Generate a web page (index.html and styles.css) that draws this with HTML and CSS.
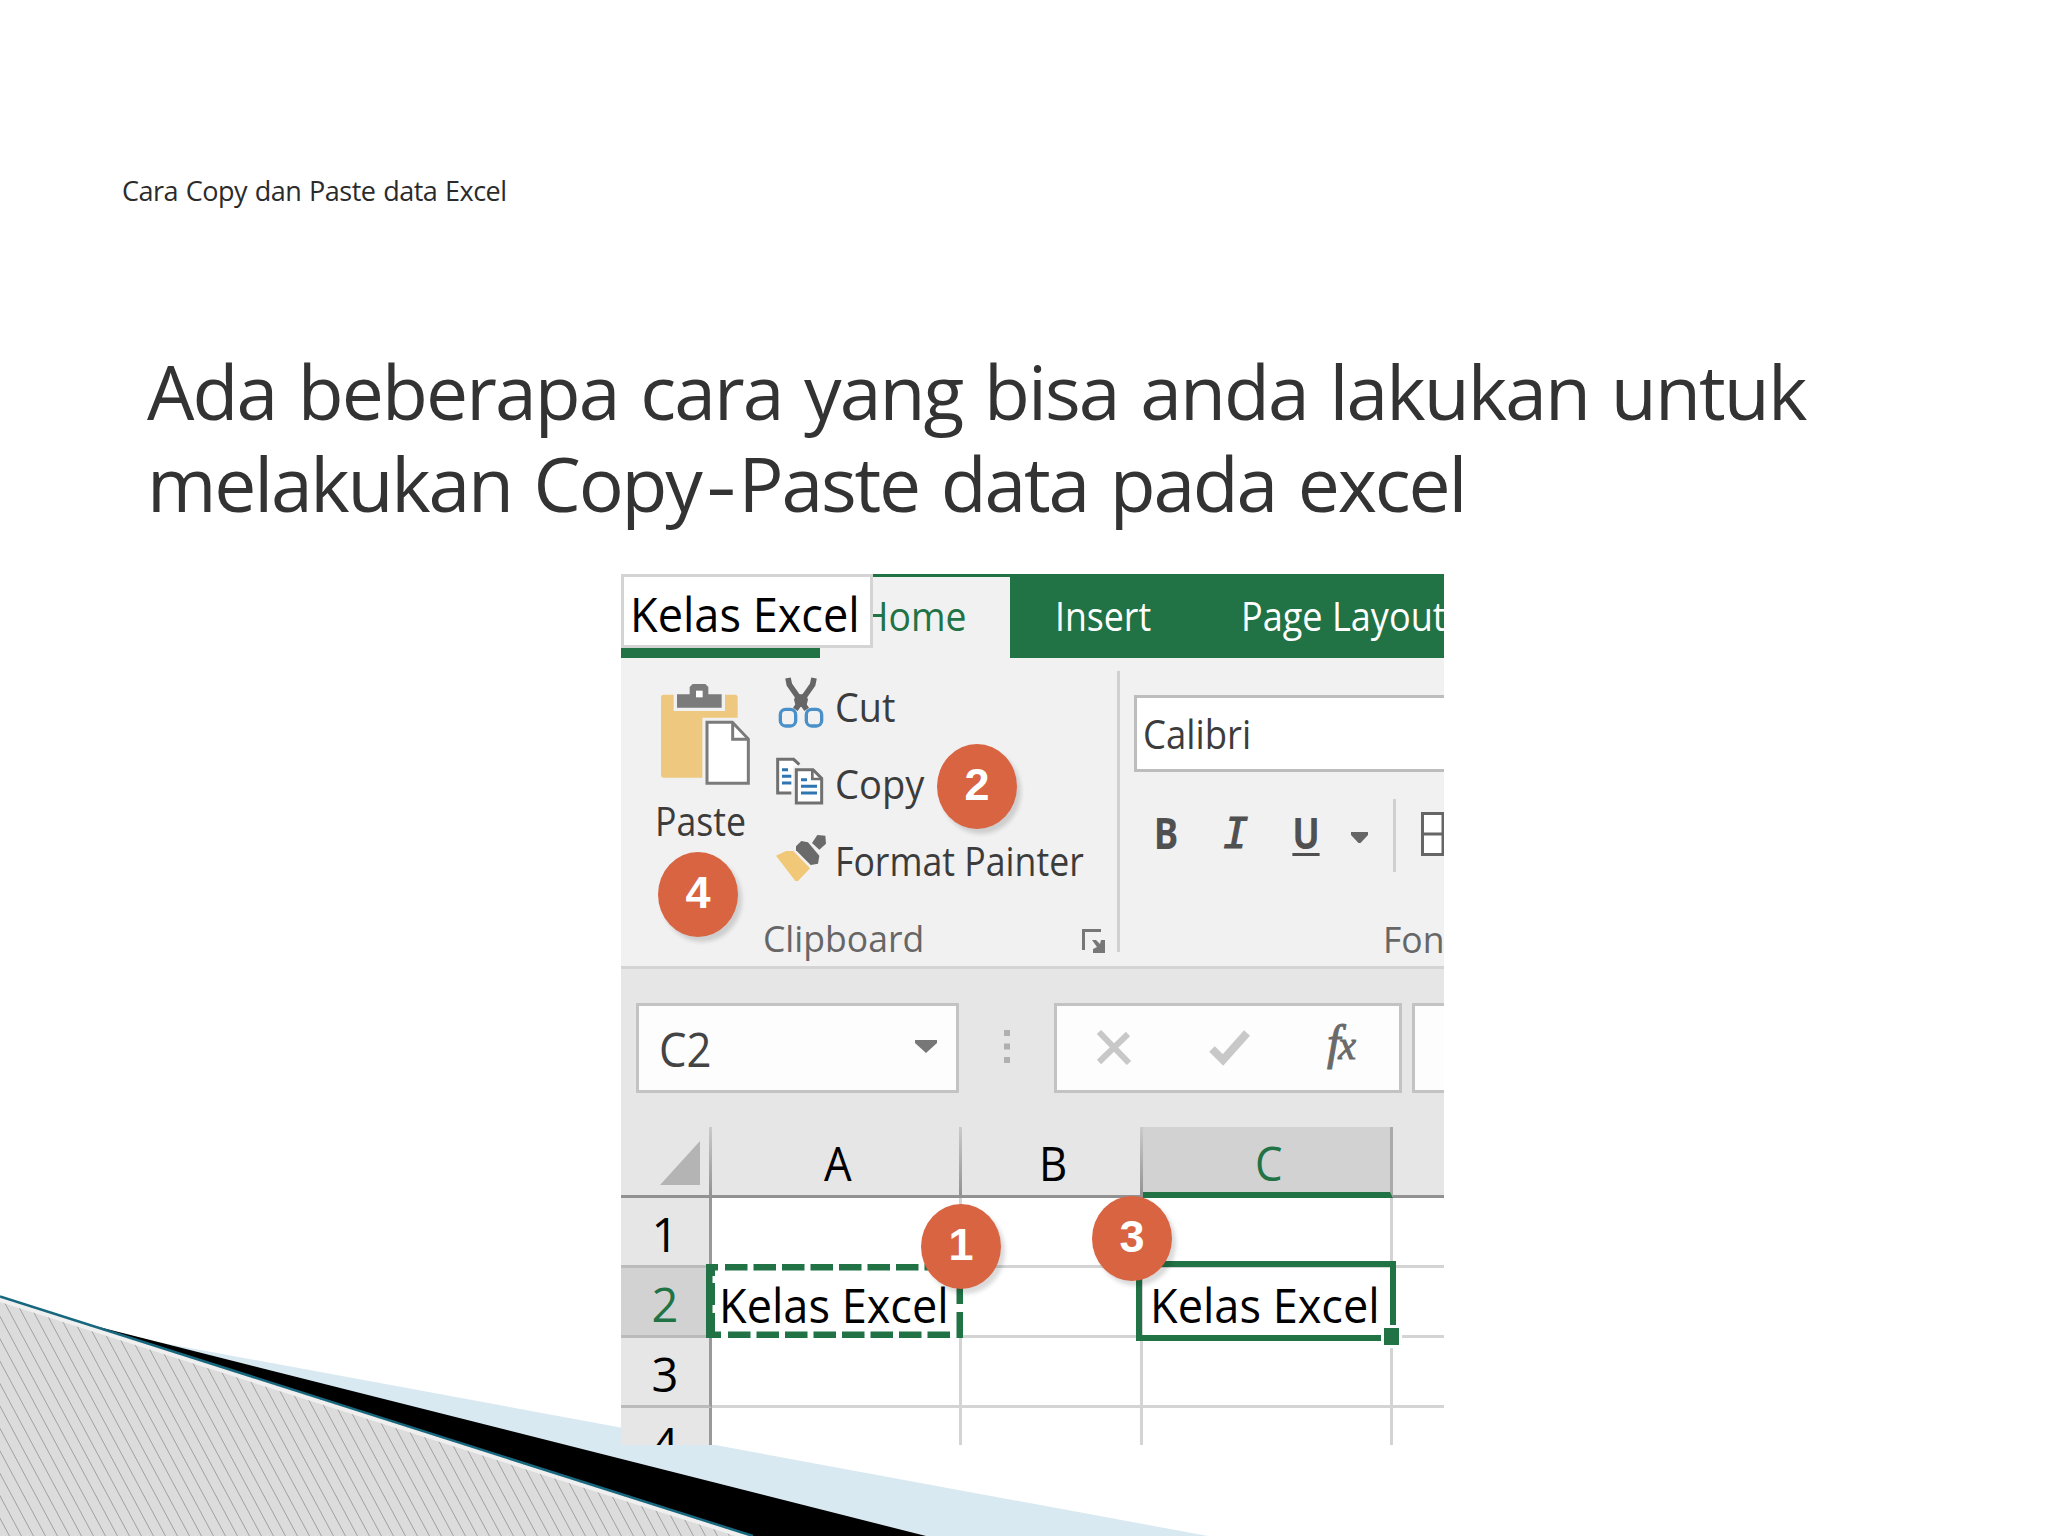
FILE: index.html
```html
<!DOCTYPE html>
<html lang="id">
<head>
    <meta charset="utf-8">
    <title>Cara Copy dan Paste data Excel</title>
    <link rel="stylesheet" href="styles.css">
</head>
<body>
    <div class="slide">
        <svg class="swoosh" viewBox="0 0 1230 250" width="1230" height="250">
            <defs>
                <pattern id="stripes" width="12" height="40" patternUnits="userSpaceOnUse" patternTransform="translate(2.2 0) skewX(28.15)">
                    <rect width="12" height="40" fill="#dcdcdc"/>
                    <rect x="5" width="1" height="40" fill="#a0a0a0"/>
                </pattern>
            </defs>
            <polygon points="125,50 1208,250 700,250" fill="#d9e9f1"/>
            <polygon points="95,40 926,250 740,250" fill="#000"/>
            <polygon points="0,10 753,250 0,250" fill="url(#stripes)"/>
            <path d="M0 14 L753 253.500" stroke="#efefef" stroke-width="4" fill="none"/>
            <path d="M0 10.500 L753 250" stroke="#17687f" stroke-width="2.500" fill="none"/>
        </svg>

        <h1>Cara Copy dan Paste data Excel</h1>
        <p class="intro"><span class="line1">Ada beberapa cara yang bisa anda lakukan untuk</span><br><span class="line2">melakukan Copy<span class="dash">-</span>Paste data pada excel</span></p>

        <div class="excel">
            <div class="tabs">
                <div class="tab-file"></div>
                <div class="tab active"><span class="sq">Home</span></div>
                <div class="tab insert"><span class="sq">Insert</span></div>
                <div class="tab layout"><span class="sq">Page Layout</span></div>
            </div>

            <div class="ribbon">
                <div class="group clipboard">
                    <div class="paste">
                        <svg viewBox="34 43 267 303" width="89" height="101">
                            <rect x="34" y="75" width="230" height="249" rx="8" fill="#edc87e"/>
                            <path d="M72 70h154v54H72z M158 144h150v210H158z" fill="#f1f1f1"/>
                            <path d="M82 74h38V52l9-9h38l9 9v22h40v40H82z" fill="#7b7b7b"/>
                            <rect x="139" y="63" width="20" height="20" fill="#fff"/>
                            <path d="M172 158h76l48 50v133H172z" fill="#fff" stroke="#7b7b7b" stroke-width="9"/>
                            <path d="M249 158v51h47" fill="none" stroke="#7b7b7b" stroke-width="9"/>
                        </svg>
                        <span class="sq">Paste</span>
                    </div>
                    <div class="commands">
                        <div class="command">
                            <svg viewBox="378 -11 150 231" width="50" height="77">
                                <path d="M414 25l4 20 52 74 M492 25l-4 20-52 74" fill="none" stroke="#666" stroke-width="17"/>
                                <path d="M438 74h30l6 16-6 22h-30l-6-22z" fill="#666"/>
                                <rect x="391" y="119" width="46" height="50" rx="16" fill="#f1f1f1" stroke="#4a90c8" stroke-width="10"/>
                                <rect x="469" y="119" width="46" height="50" rx="16" fill="#f1f1f1" stroke="#4a90c8" stroke-width="10"/>
                            </svg>
                            <span class="sq cut">Cut</span>
                        </div>
                        <div class="command">
                            <svg viewBox="378 220 150 231" width="50" height="77">
                                <path d="M424 370h-41V269h48l17 16" fill="#fff" stroke="#707070" stroke-width="9"/>
                                <path d="M396 300h18M396 320h28M396 340h28" stroke="#2f76b0" stroke-width="9"/>
                                <path d="M429 289h60l37 36v84h-97z" fill="#f1f1f1"/>
                                <path d="M439 300h50l26 26v74h-76z" fill="#fff" stroke="#707070" stroke-width="9"/>
                                <path d="M487 300v28h28" fill="none" stroke="#707070" stroke-width="8"/>
                                <path d="M453 330h18M453 350h48M453 370h48" stroke="#2f76b0" stroke-width="9"/>
                            </svg>
                            <span class="sq copy">Copy</span>
                        </div>
                        <div class="command">
                            <svg viewBox="378 451 150 231" width="50" height="77">
                                <path d="M378 558l30-14h22l50 52-36 38h-8z" fill="#f0c878"/>
                                <path d="M438 530l16-16 20 4 34 40-4 24-22 4-44-44z" fill="#6a6a6a"/>
                                <path d="M486 520l16-24 24 2 2 24-20 18z" fill="#6a6a6a"/>
                            </svg>
                            <span class="sq">Format Painter</span>
                        </div>
                    </div>
                    <div class="group-name">
                        <span class="sq">Clipboard</span>
                        <svg viewBox="0 0 24 24" width="24" height="24">
                            <path d="M1.500 21V1.500H19" fill="none" stroke="#777" stroke-width="3"/>
                            <path d="M10 11h4l4 4 1-4h4v13H11v-4l4-2z" fill="#777"/>
                        </svg>
                    </div>
                </div>
                <div class="divider"></div>
                <div class="group font">
                    <div class="font-box"><span class="sq">Calibri</span></div>
                    <div class="font-style">
                        <b>B</b>
                        <i>I</i>
                        <u><span>U</span></u>
                        <svg class="caret" viewBox="0 0 17 11" width="17" height="11"><path d="M0 0h17v3L9.500 11h-2L0 3z" fill="#666"/></svg>
                        <div class="sep"></div>
                        <svg class="borders" viewBox="0 0 44 44" width="44" height="44">
                            <path d="M1.500 1.500h41v41h-41z M1.500 22h41 M22 1.500v41" fill="#fff" stroke="#666" stroke-width="3"/>
                        </svg>
                    </div>
                    <div class="group-name"><span class="sq">Font</span></div>
                </div>
            </div>

            <div class="formula-bar">
                <div class="name-box">
                    <span class="sq">C2</span>
                    <svg viewBox="0 0 22 13" width="22" height="13"><path d="M0 0h22v3L11 13 0 3z" fill="#777"/></svg>
                </div>
                <svg class="dots" viewBox="0 0 6 33" width="6" height="33"><path d="M0 0h6v6H0z M0 13.500h6v6H0z M0 27h6v6H0z" fill="#b0b0b0"/></svg>
                <div class="fx-box">
                    <svg viewBox="0 0 36 35" width="36" height="35"><path d="M3 2l30 31M32 4L3 32" stroke="#c8c8c8" stroke-width="6"/></svg>
                    <svg viewBox="0 0 42 36" width="42" height="36"><path d="M3 19l11 11L38 3" fill="none" stroke="#c8c8c8" stroke-width="8"/></svg>
                    <span class="fx">f<small>x</small></span>
                </div>
                <div class="input"></div>
            </div>

            <div class="sheet">
                <div class="corner"><svg viewBox="0 0 40 44" width="40" height="44"><path d="M40 0v44H0z" fill="#b4b4b4"/></svg></div>
                <div class="col"><span>A</span></div>
                <div class="col"><span>B</span></div>
                <div class="col selected"><span>C</span></div>
                <div class="col last"></div>

                <div class="row">1</div>
                <div class="cell"></div><div class="cell"></div><div class="cell"></div><div class="cell last"></div>

                <div class="row selected">2</div>
                <div class="cell"><span class="sq">Kelas Excel</span></div><div class="cell"></div><div class="cell"><span class="sq">Kelas Excel</span></div><div class="cell last"></div>

                <div class="row">3</div>
                <div class="cell"></div><div class="cell"></div><div class="cell"></div><div class="cell last"></div>

                <div class="row">4</div>
                <div class="cell"></div><div class="cell"></div><div class="cell"></div><div class="cell last"></div>
            </div>

            <!-- marching ants around A2 -->
            <svg class="ants" viewBox="0 0 257 74" width="257" height="74">
                <rect width="257" height="74" fill="none" stroke="#fff" stroke-width="13"/>
                <path d="M0 0h6.500v74H0z M6 0h3v12H6z M6 19h3v22H6z M6 49h3v25H6z" fill="#217346"/>
                <path d="M0 3.250h12" stroke="#217346" stroke-width="6.500"/>
                <path d="M19 3.250h238" stroke="#217346" stroke-width="6.500" stroke-dasharray="22.500 6"/>
                <path d="M0 70.750h15" stroke="#217346" stroke-width="6.500"/>
                <path d="M22 70.750h222" stroke="#217346" stroke-width="6.500" stroke-dasharray="22.500 6"/>
                <path d="M250.500 0h6.500v40h-6.500z M250.500 48h6.500v26h-6.500z" fill="#217346"/>
            </svg>
            <div class="active-cell"><div class="handle"></div></div>

            <div class="tooltip"><span class="sq">Kelas Excel</span></div>
            <div class="badge b1">1</div>
            <div class="badge b2">2</div>
            <div class="badge b3">3</div>
            <div class="badge b4">4</div>
        </div>
    </div>
</body>
</html>
```
FILE: styles.css
```css
* {
    box-sizing: border-box;
}

body {
    margin: 0;
    background: #fff;
    font-family: "Open Sans", "Noto Sans", sans-serif;
    color: #333;
}

svg {
    display: block;
    flex-shrink: 0;
}

.slide {
    position: relative;
    width: 2048px;
    height: 1536px;
    overflow: hidden;
}

.swoosh {
    position: absolute;
    left: 0;
    bottom: 0;
}

h1 {
    margin: 0;
    padding: 171px 0 0 122px;
    font-size: 27px;
    line-height: 40px;
    font-weight: 400;
    letter-spacing: -0.5px;
    word-spacing: 1.2px;
    color: #2b2b2b;
}

.intro {
    margin: 134px 0 0 147px;
    font-size: 75px;
    line-height: 92px;
    white-space: nowrap;
}

.line1 {
    letter-spacing: -1.9px;
    word-spacing: 4px;
}

.line2 {
    letter-spacing: -2.2px;
    word-spacing: 4.5px;
}

.dash {
    display: inline-block;
    margin: 0 8px;
    transform: scaleX(1.25);
}

/* Excel window */
.excel {
    position: relative;
    width: 823px;
    height: 871px;
    margin: 45px 0 0 621px;
    overflow: hidden;
    background: #f1f1f1;
    font-size: 41px;
    line-height: 40px;
}

.sq {
    display: inline-block;
    white-space: nowrap;
    transform: scaleX(0.87);
    transform-origin: left;
}

.tabs {
    display: flex;
    height: 84px;
    background: #217346;
    color: #fff;
    line-height: 82px;
}

.tab-file {
    flex: 0 0 199px;
}

.tab.active {
    flex: 0 0 190px;
    margin-top: 3px;
    padding-left: 41px;
    line-height: 77px;
    background: #f1f1f1;
    color: #217346;
}

.tab.active .sq {
    transform: scaleX(0.91);
}

.tab.insert {
    flex: 0 0 186px;
    padding-left: 45px;
}

.tab.layout {
    padding-left: 45px;
}

.tab.layout .sq {
    transform: scaleX(0.88);
}

.tooltip {
    position: absolute;
    left: 0;
    top: 0;
    width: 252px;
    height: 74px;
    padding-left: 6px;
    border: 3px solid #d4d4d4;
    background: #fff;
    color: #000;
    font-size: 47px;
    line-height: 74px;
}

.tooltip .sq,
.cell .sq {
    transform: scaleX(0.96);
}

/* Ribbon */
.ribbon {
    display: flex;
    height: 311px;
    border-bottom: 3px solid #d4d4d4;
    color: #3c3c3c;
}

.clipboard {
    flex: 0 0 496px;
    min-width: 0;
    display: grid;
    grid-template-columns: 155px minmax(0, 1fr);
    grid-template-rows: 239px 1fr;
}

.paste {
    padding: 26px 0 0 40px;
}

.paste .sq {
    margin: 15px 0 0 -6px;
}

.commands {
    padding-top: 8px;
}

.command {
    display: flex;
    align-items: center;
    gap: 9px;
    height: 77px;
}

.command .sq {
    padding-top: 2px;
}

.command .cut {
    transform: scaleX(0.92);
}

.command .copy {
    transform: scaleX(0.93);
}

.group-name {
    display: flex;
    font-size: 37px;
    color: #666;
}

.group-name .sq {
    transform: scaleX(0.96);
}

.clipboard .group-name {
    grid-column: span 2;
    padding: 21px 11px 0 142px;
}

.group-name svg {
    margin: 11px 0 0 auto;
}

.divider {
    flex: 0 0 3px;
    margin: 13px 0 14px;
    background: #d0d0d0;
}

.font {
    flex: 1;
    min-width: 0;
    overflow: hidden;
}

.font-box {
    height: 77px;
    margin: 37px 0 0 14px;
    padding-left: 6px;
    border: 3px solid #bdbdbd;
    border-right: 0;
    background: #fff;
    line-height: 71px;
}

.font-box .sq {
    transform: scaleX(0.89);
}

.font-style {
    display: flex;
    height: 73px;
    margin: 27px 0 0 11px;
    font-size: 43px;
    line-height: 67px;
    color: #505050;
}

.font-style b,
.font-style i,
.font-style u {
    flex: 0 0 70px;
    text-align: center;
    text-decoration: none;
    font-weight: 700;
}

.font-style b,
.font-style u {
    transform: scaleX(0.85);
}

.font-style i {
    font-family: "DejaVu Sans Mono", monospace;
    font-style: oblique;
    font-weight: 400;
    font-size: 42px;
    line-height: 70px;
    -webkit-text-stroke: 1px #505050;
}

.font-style u span {
    display: inline-block;
    height: 57px;
    border-bottom: 3px solid #505050;
}

.caret {
    margin: 33px 0 0 10px;
}

.sep {
    flex: 0 0 3px;
    margin-left: 25px;
    background: #d0d0d0;
}

.borders {
    margin: 13px 0 0 25px;
}

.font .group-name {
    padding: 47px 0 0 263px;
}

/* Formula bar */
.formula-bar {
    display: flex;
    height: 158px;
    padding-top: 34px;
    background: #e6e6e6;
}

.name-box,
.fx-box,
.input {
    height: 90px;
    border: 3px solid #c3c3c3;
    background: #fdfdfd;
}

.name-box {
    display: flex;
    justify-content: space-between;
    flex: 0 0 323px;
    margin-left: 15px;
    padding: 0 19px 0 20px;
    font-size: 47px;
    line-height: 87px;
    color: #444;
}

.name-box .sq {
    transform: scaleX(0.93);
}

.name-box svg {
    margin-top: 34px;
}

.dots {
    margin: 27px 44px 0 45px;
}

.fx-box {
    display: flex;
    flex: 0 0 348px;
    padding: 24px 0 0 39px;
}

.fx-box svg + svg {
    margin-left: 77px;
}

.fx {
    margin: -10px 0 0 76px;
    font: italic 400 48px/46px "Liberation Serif", serif;
    color: #6a6a6a;
    -webkit-text-stroke: 1px #6a6a6a;
}

.fx small {
    font-size: 40px;
    margin-left: -2px;
}

.input {
    flex: 1;
    margin-left: 10px;
    border-right: 0;
}

/* Sheet */
.sheet {
    display: grid;
    grid-template-columns: 91px 250px 181px 250px 1fr;
    grid-template-rows: 71px 70px 70px 70px 70px;
    background: #fff;
    color: #000;
    font-size: 47px;
}

.corner,
.col {
    background: #e6e6e6;
    border-right: 3px solid;
    border-bottom: 3px solid #999;
    border-image: linear-gradient(#cdcdcd, #909090) 3;
    line-height: 73px;
    text-align: center;
}

.corner {
    padding: 14px 0 0 39px;
}

.col span {
    display: inline-block;
    padding-left: 4px;
    transform: scaleX(0.93);
}

.col.selected {
    background: #d2d2d2;
    color: #217346;
    border-image: none;
    border-right-color: #aaa;
    border-bottom: 6px solid #217346;
}

.col.last {
    border-right: 0;
}

.row {
    padding-left: 0;
    border-right: 3px solid #999;
    border-bottom: 3px solid #bbb;
    background: #e6e6e6;
    line-height: 72px;
    text-align: center;
}

.row.selected {
    background: #d2d2d2;
    color: #217346;
}

.cell {
    border-right: 3px solid #d4d4d4;
    border-bottom: 3px solid #d4d4d4;
    line-height: 74px;
    padding-left: 7px;
}

.cell.last {
    border-right: 0;
}

.ants {
    position: absolute;
    left: 85px;
    top: 690px;
}

.active-cell {
    position: absolute;
    left: 515px;
    top: 687px;
    width: 260px;
    height: 80px;
    border: 6px solid #217346;
}

.handle {
    position: absolute;
    right: -12px;
    bottom: -13px;
    width: 21px;
    height: 23px;
    border: 3px solid #fff;
    background: #217346;
}

.badge {
    position: absolute;
    width: 80px;
    height: 85px;
    border-radius: 50%;
    background: #d96442;
    box-shadow: 4px 5px 4px rgba(0, 0, 0, 0.15);
    color: #fff;
    font: 700 45px/82px "Liberation Sans", sans-serif;
    text-align: center;
}

.b1 {
    left: 300px;
    top: 630px;
}

.b2 {
    left: 316px;
    top: 170px;
}

.b3 {
    left: 471px;
    top: 622px;
}

.b4 {
    left: 37px;
    top: 278px;
}
```
